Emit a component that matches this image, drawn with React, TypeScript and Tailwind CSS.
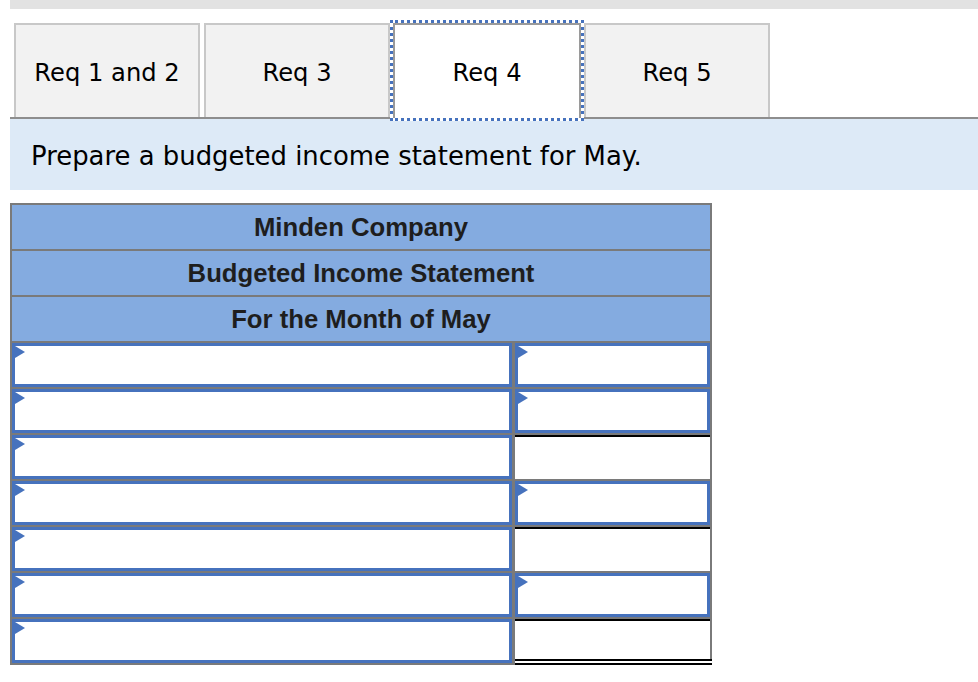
import React from 'react'

type RightKind = 'select' | 'total' | 'final'

const tabs = ['Req 1 and 2', 'Req 3', 'Req 4', 'Req 5']
const activeTab = 2

const rightCells: RightKind[] = ['select', 'select', 'total', 'select', 'total', 'select', 'final']

function Marker() {
  return (
    <svg className="absolute left-0 top-0" width="10" height="12" viewBox="0 0 10 12">
      <polygon points="0,0 10,6 0,12" fill="#4672bd" />
    </svg>
  )
}

function SelectCell() {
  return (
    <div className="relative h-full border-[3px] border-[#4672bd] bg-white">
      <Marker />
    </div>
  )
}

export default function App() {
  return (
    <div className="min-h-[682px] w-[978px] bg-white font-['DejaVu_Sans',Verdana,sans-serif] text-black">
      {/* top strip */}
      <div className="ml-[10px] h-[9px] bg-[#e2e2e2]" />

      {/* tabs */}
      <div className="ml-[10px] mt-[14px] flex items-end gap-[4px] border-b-2 border-[#8e8e8e] pl-[4px]">
        {tabs.map((t, i) =>
          i === activeTab ? (
            <div
              key={t}
              className="relative z-10 -mx-[4px] -mb-[4px] -mt-[3px] h-[101px] w-[194px] border-[3px] border-dotted border-[#4672bd] bg-white"
            >
              <div className="flex h-full items-center justify-center border-2 border-b-0 border-[#9a9a9a] bg-white pt-[3px] text-[24.2px]">
                {t}
              </div>
            </div>
          ) : (
            <div
              key={t}
              className="flex h-[94px] w-[186px] items-center justify-center border-2 border-b-0 border-[#c8c8c8] bg-[#f2f2f2] pt-[4px] text-[24.2px]"
            >
              {t}
            </div>
          )
        )}
      </div>

      {/* instruction */}
      <div className="ml-[10px] flex h-[71px] items-center bg-[#ddeaf7] pl-[21px] pt-[3px] text-[25.9px]">
        Prepare a budgeted income statement for May.
      </div>

      {/* statement */}
      <div className="ml-[10px] mt-[13px] w-[702px] border-2 border-b-0 border-[#7a7a7a] font-['Liberation_Sans',Arial,sans-serif]">
        {['Minden Company', 'Budgeted Income Statement', 'For the Month of May'].map((h) => (
          <div
            key={h}
            className="flex h-[46px] items-center justify-center border-b-2 border-[#7a7a7a] bg-[#84abe0] text-[25.7px] font-bold text-[#1e1e1e]"
          >
            {h}
          </div>
        ))}

        {rightCells.map((kind, i) => (
          <div key={i} className="flex h-[46px] border-b-2 border-[#7a7a7a]">
            <div className="h-[44px] w-[500px]">
              <SelectCell />
            </div>
            <div className="w-[3px] bg-[#7a7a7a]" />
            <div className="h-[44px] w-[195px]">
              {kind === 'select' && <SelectCell />}
              {kind === 'total' && <div className="h-full border-t-2 border-black bg-white" />}
              {kind === 'final' && (
                <div className="relative h-[46px] border-t-2 border-black bg-white">
                  <div className="absolute -right-[2px] bottom-0 left-0 h-[6px] border-y-2 border-black bg-white" />
                </div>
              )}
            </div>
          </div>
        ))}
      </div>
    </div>
  )
}
